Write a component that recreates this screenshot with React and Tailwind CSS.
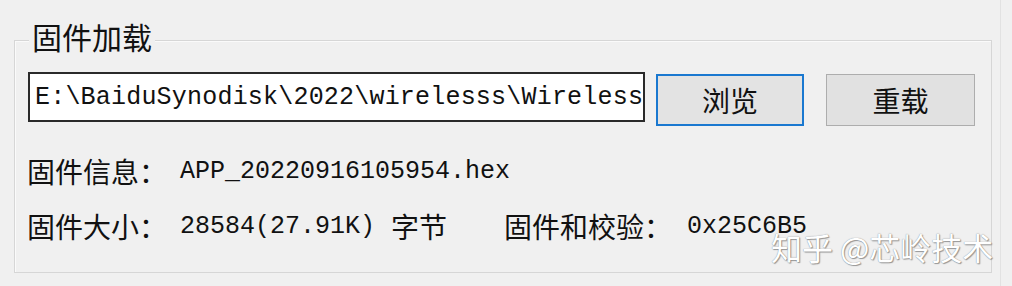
export default function App() {
  const cjk = "[font-family:'Noto_Sans_CJK_SC','Noto_Sans',sans-serif]";
  return (
    <div className="relative h-[286px] w-[1012px] overflow-hidden bg-[#f0f0f0] text-[#111]">
      <div className="absolute right-[11px] top-0 h-full w-px bg-[#e2e2e2]" />
      <div className="pl-[14px] pt-[40px]">
        <div className="relative h-[233px] w-[978px] border border-[#d6d6d6] shadow-[inset_1px_1px_0_#fafafa]">
          <div className={`absolute left-[14px] top-[-27px] bg-[#f0f0f0] px-[3px] text-[30px] leading-[44px] ${cjk}`}>
            固件加载
          </div>

          <div className="flex items-start pl-[13px] pt-[31px]">
            <div className="flex h-[50px] w-[617px] items-center overflow-hidden border-2 border-[#2a2a2a] bg-white pl-[5px]">
              <span className="whitespace-nowrap text-[25px] leading-none tracking-[0.2px] [font-family:'Liberation_Mono',monospace]">
                E:\BaiduSynodisk\2022\wirelesss\Wireless
              </span>
            </div>
            <button className={`ml-[11px] mt-[2px] h-[52px] w-[148px] border-2 border-[#1a78d0] bg-[#e3e3e3] text-[28px] leading-none ${cjk}`}>
              浏览
            </button>
            <button className={`ml-[22px] mt-[2px] h-[52px] w-[149px] border border-[#adadad] bg-[#e1e1e1] text-[28px] leading-none ${cjk}`}>
              重载
            </button>
          </div>

          <div className="mt-[27px] flex h-[36px] items-center pl-[12px]">
            <span className={`w-[153px] text-[28px] leading-none ${cjk}`}>固件信息：</span>
            <span className="text-[25px] leading-none [font-family:'Liberation_Mono',monospace]">APP_20220916105954.hex</span>
          </div>

          <div className="mt-[19px] flex h-[36px] items-center pl-[12px]">
            <span className={`w-[153px] text-[28px] leading-none ${cjk}`}>固件大小：</span>
            <span className="text-[25px] leading-none [font-family:'Liberation_Mono',monospace]">28584(27.91K)</span>
            <span className={`ml-[16px] text-[28px] leading-none ${cjk}`}>字节</span>
            <span className={`ml-[57px] w-[183px] text-[28px] leading-none ${cjk}`}>固件和校验：</span>
            <span className="text-[25px] leading-none [font-family:'Liberation_Mono',monospace]">0x25C6B5</span>
          </div>

          <div className={`absolute left-[756px] top-[190px] whitespace-nowrap text-[31px] leading-none text-white ${cjk} [text-shadow:0_0_1px_#777,1px_1px_1px_#999]`}>
            知乎 @芯岭技术
          </div>
        </div>
      </div>
    </div>
  );
}
